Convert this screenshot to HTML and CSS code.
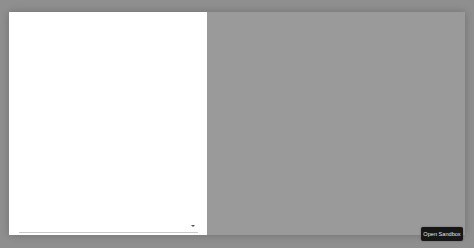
FILE: index.html
```html
<!DOCTYPE html>
<html>
<head>
<meta charset="utf-8">
<link rel="stylesheet" href="styles.css">
</head>
<body>
<div class="frame">
  <div class="window">
    <aside class="drawer">
      <div class="field">
        <div class="select"><span class="arrow"></span></div>
      </div>
    </aside>
    <div class="backdrop"></div>
  </div>
</div>
<a class="open-btn">Open Sandbox</a>
</body>
</html>
```
FILE: styles.css
```css
html, body {
  margin: 0;
  padding: 0;
  width: 474px;
  height: 248px;
  overflow: hidden;
  background: #8f8f8f;
  font-family: "Liberation Sans", Arial, sans-serif;
}
.frame {
  box-sizing: border-box;
  height: 248px;
  padding: 12px 9px 13px 9px;
}
.window {
  display: flex;
  height: 100%;
  background: #9a9a9a;
  box-shadow: 0 0 8px rgba(0, 0, 0, 0.22);
}
.drawer {
  width: 198px;
  background: #ffffff;
  display: flex;
  flex-direction: column;
  justify-content: flex-end;
}
.field {
  padding: 0 9px 2px 10px;
}
.select {
  height: 8px;
  border-bottom: 1px solid #c9c9c9;
  display: flex;
  justify-content: flex-end;
  align-items: flex-start;
  padding-right: 3px;
}
.arrow {
  width: 0;
  height: 0;
  border-left: 2px solid transparent;
  border-right: 2px solid transparent;
  border-top: 2px solid #555;
  margin-top: 1px;
}
.backdrop {
  flex: 1;
}
.open-btn {
  position: absolute;
  right: 11px;
  bottom: 7px;
  width: 42px;
  height: 14px;
  box-sizing: border-box;
  background: #161616;
  color: #e6e6e6;
  border-radius: 2px;
  font-size: 5.6px;
  line-height: 14px;
  text-align: center;
  white-space: nowrap;
  box-shadow: 0 0 2px rgba(0,0,0,0.3);
}
```
